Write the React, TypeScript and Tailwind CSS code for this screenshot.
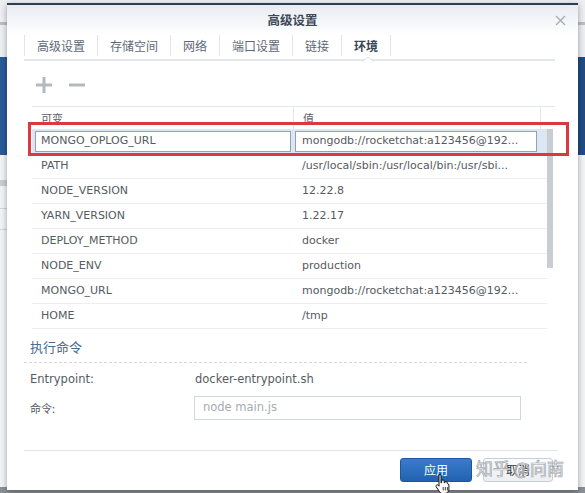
import React from "react";

const envRows: [string, string][] = [
  ["MONGO_OPLOG_URL", "mongodb://rocketchat:a123456@192..."],
  ["PATH", "/usr/local/sbin:/usr/local/bin:/usr/sbi..."],
  ["NODE_VERSION", "12.22.8"],
  ["YARN_VERSION", "1.22.17"],
  ["DEPLOY_METHOD", "docker"],
  ["NODE_ENV", "production"],
  ["MONGO_URL", "mongodb://rocketchat:a123456@192..."],
  ["HOME", "/tmp"],
];

const tabs = ["高级设置", "存储空间", "网络", "端口设置", "链接", "环境"];

function Desktop() {
  // what shows of the DSM desktop around the window
  return (
    <div className="flex h-full flex-col">
      <div className="flex h-[57px] flex-col bg-[#eceef1]">
        <div className="h-[22px]" />
        <div className="h-[3px] bg-[#b9bec4]" />
      </div>
      <div className="flex h-[98px] justify-between">
        <div className="w-[7px] bg-[#285b98]" />
        <div className="w-[8px] bg-[#1f4c84]" />
      </div>
      <div className="flex flex-1 flex-col bg-[#f2f3f5]">
        <div className="mt-[25px] h-[6px] w-[8px] bg-[#c9cdd2]" />
        <div className="mt-[22px] h-px w-[8px] bg-[#cfd3d8]" />
        <div className="mt-[20px] h-px w-[8px] bg-[#cfd3d8]" />
        <div className="flex-1" />
        <div className="h-[6px] bg-[#8b9096]" />
      </div>
    </div>
  );
}

function PlusIcon() {
  return (
    <svg width="18" height="18" viewBox="0 0 18 18">
      <path d="M9 1v16M1 9h16" stroke="#b3b9c0" strokeWidth="3" />
    </svg>
  );
}

function MinusIcon() {
  return (
    <svg width="18" height="18" viewBox="0 0 18 18">
      <path d="M1 9h16" stroke="#b3b9c0" strokeWidth="3" />
    </svg>
  );
}

function HandCursor() {
  return (
    <svg width="16" height="22" viewBox="0 0 16 22">
      <path
        d="M4.5 1.5c.8 0 1.5.6 1.5 1.4v7l.6-.1V8.2c0-.8.6-1.3 1.3-1.3s1.3.5 1.3 1.3v1.6h.5c0-.8.6-1.3 1.3-1.3s1.3.5 1.3 1.3v.9h.3c.7 0 1.3.5 1.3 1.3v4.2c0 2.5-1.7 4.3-4.3 4.3H7.6c-1.3 0-2.3-.6-3-1.7L1.3 14c-.5-.7-.3-1.5.3-1.9.6-.4 1.3-.3 1.8.3l.6.8V2.9c0-.8.7-1.4 1.5-1.4z"
        fill="#fff"
        stroke="#111"
        strokeWidth="1"
      />
      <path d="M8.2 14v3.5M10.3 14v3.5M12.4 14v3.5" stroke="#111" strokeWidth="0.8" />
    </svg>
  );
}

function EnvTable() {
  return (
    <div className="ml-[8px] mt-[12px] w-[523px] text-[11px] text-[#555b61]">
      <div className="flex h-[23px] items-center border-t border-[#e4e7ea]">
        <div className="flex h-full w-[261px] items-center pl-[9px] font-['Noto_Sans_CJK_SC',sans-serif] text-[11px] text-[#5a6068]">
          可变
        </div>
        <div className="flex h-full w-[247px] items-center border-l border-[#e4e7ea] pl-[9px] font-['Noto_Sans_CJK_SC',sans-serif] text-[11px] text-[#5a6068]">
          值
        </div>
        <div className="h-full flex-1 border-l border-[#e4e7ea]" />
      </div>
      <div className="flex">
        <div className="flex w-[515px] flex-col">
          {envRows.map(([name, value], i) =>
            i === 0 ? (
              <div
                key={name}
                className="flex h-[25px] items-center border-b border-[#e6e9ec] bg-[#dce7f3]"
              >
                <div className="ml-[3px] flex h-[21px] w-[256px] items-center border border-[#8ea3ba] bg-white pl-[5px]">
                  {name}
                </div>
                <div className="ml-[4px] flex h-[21px] w-[242px] items-center border border-[#8ea3ba] bg-white pl-[6px]">
                  {value}
                </div>
              </div>
            ) : (
              <div
                key={name}
                className="flex h-[25px] items-center border-b border-[#eceef1]"
              >
                <div className="w-[261px] pl-[9px]">{name}</div>
                <div className="pl-[9px] whitespace-nowrap">{value}</div>
              </div>
            )
          )}
        </div>
        <div className="w-[8px]">
          <div className="h-[139px] w-[6px] bg-[#c8cdd3]" />
        </div>
      </div>
    </div>
  );
}

export default function App() {
  return (
    <div className="relative h-[493px] w-[585px] overflow-hidden font-['DejaVu_Sans','Noto_Sans_CJK_SC',sans-serif]">
      <Desktop />

      <div className="absolute left-[7px] top-[3px] flex h-[487px] w-[571px] flex-col border-t-2 border-[#2b3d55] bg-white shadow-[0_2px_6px_rgba(0,0,0,0.35)]">
        {/* title bar */}
        <div className="grid h-[30px] grid-cols-[40px_1fr_40px] items-center bg-gradient-to-b from-[#e8ecf1] to-white">
          <div />
          <div className="text-center font-['Noto_Sans_CJK_SC',sans-serif] text-[12.5px] font-bold text-[#3d4957]">
            高级设置
          </div>
          <div className="flex justify-end pr-[12px]">
            <svg width="11" height="11" viewBox="0 0 11 11">
              <path d="M1 1l9 9M10 1l-9 9" stroke="#a3abb4" strokeWidth="1.3" />
            </svg>
          </div>
        </div>

        <div className="flex flex-1 flex-col pl-[17px] pr-[20px]">
          {/* tabs */}
          <div className="flex h-[24px] font-['Noto_Sans_CJK_SC',sans-serif] text-[12px]">
            {tabs.map((t, i) => {
              const active = t === "环境";
              return (
                <div
                  key={t}
                  className={
                    "relative flex h-[21px] items-center border-l border-[#e2e5e9] px-[12px] " +
                    (i === tabs.length - 1 ? "border-r " : "") +
                    (active ? "font-bold text-[#3b4654]" : "text-[#5d6977]")
                  }
                >
                  {t}
                  {active && (
                    <svg
                      className="absolute bottom-[-6px] left-[20px]"
                      width="12"
                      height="6"
                      viewBox="0 0 12 6"
                    >
                      <path d="M0 6L6 1l6 5" fill="#fff" stroke="#dfe3e7" strokeWidth="1" />
                    </svg>
                  )}
                </div>
              );
            })}
          </div>
          <div className="h-[2px] w-[531px] bg-[#e3e6e9]" />

          {/* add / remove */}
          <div className="ml-[11px] mt-[15px] flex gap-[15px]">
            <PlusIcon />
            <MinusIcon />
          </div>

          <EnvTable />

          {/* command section */}
          <div className="ml-[6px] mt-[9px] flex h-[18px] items-center font-['Noto_Sans_CJK_SC',sans-serif] text-[13px] text-[#4a6b91]">
            执行命令
          </div>
          <div className="mt-[6px] w-[503px] border-t border-dashed border-[#d3d8dd]" />

          <div className="ml-[6px] mt-[7px] flex h-[20px] items-center text-[11.5px] text-[#555b61]">
            <div className="w-[165px]">Entrypoint:</div>
            <div>docker-entrypoint.sh</div>
          </div>
          <div className="ml-[6px] mt-[6px] flex h-[24px] items-center text-[11.5px] text-[#555b61]">
            <div className="w-[164px] font-['Noto_Sans_CJK_SC',sans-serif] text-[11px]">
              命令:
            </div>
            <div className="flex h-[24px] w-[327px] items-center border border-[#d2d7dc] pl-[8px] text-[#a5abb1]">
              node main.js
            </div>
          </div>

          <div className="mt-[30px] w-[534px] border-t border-[#e1e4e7]" />

          {/* footer buttons */}
          <div className="mt-[7px] flex w-[529px] justify-end gap-[11px] font-['Noto_Sans_CJK_SC',sans-serif] text-[12px]">
            <div className="flex h-[24px] w-[72px] items-center justify-center rounded-[3px] border border-[#1d569e] bg-gradient-to-b from-[#3a7bcc] to-[#2162b0] text-white">
              应用
            </div>
            <div className="flex h-[24px] w-[70px] items-center justify-center rounded-[3px] border border-[#c9ced3] bg-gradient-to-b from-[#fafbfc] to-[#eceef1] text-[#333]">
              取消
            </div>
          </div>
        </div>
      </div>

      {/* watermark and pointer lie over the window */}
      <div className="absolute left-[476px] top-[459px] font-['Noto_Sans_CJK_SC',sans-serif] text-[17px] leading-none text-white/60 [-webkit-text-stroke:0.7px_#9ea4aa]">
        知乎 @向南
      </div>
      <div className="absolute left-[435px] top-[473px]">
        <HandCursor />
      </div>

      {/* annotation box */}
      <div className="absolute left-[28px] top-[122px] h-[34px] w-[541px] border-[3px] border-[#d9393f]" />
    </div>
  );
}
